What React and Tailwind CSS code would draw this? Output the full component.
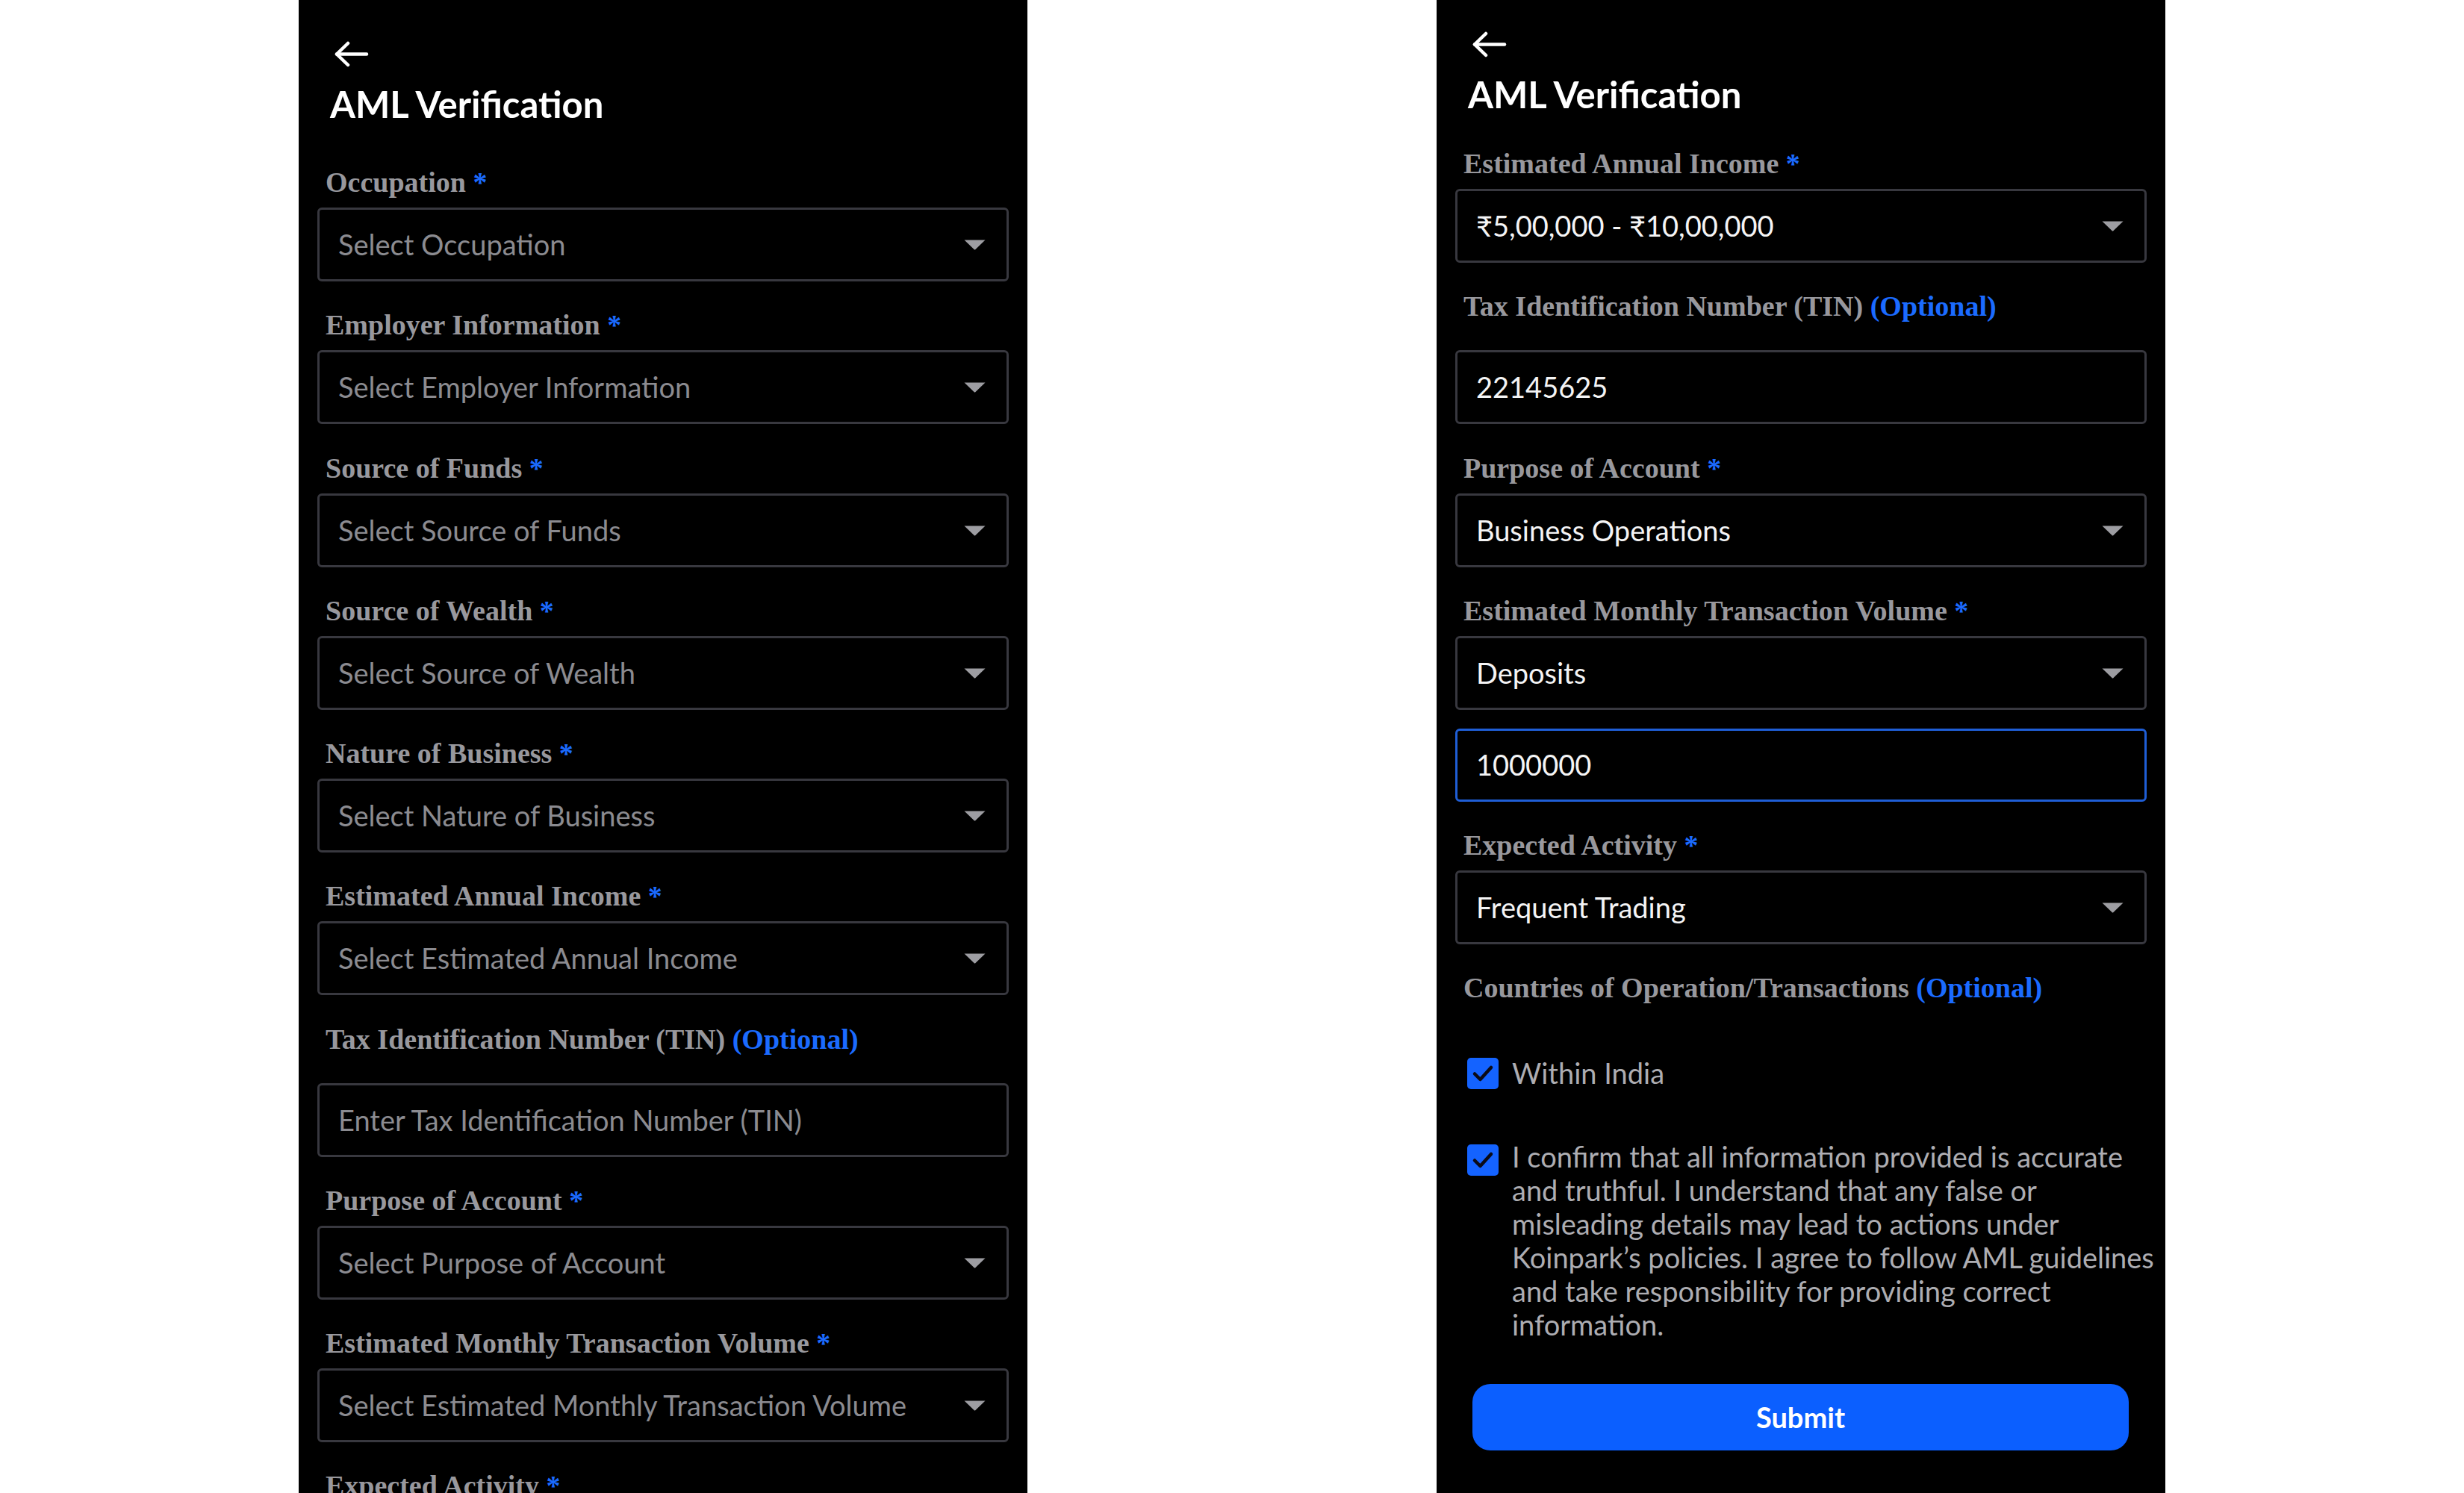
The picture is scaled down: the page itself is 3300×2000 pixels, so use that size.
import React from 'react'

/**
 * AML Verification – two phone screens side by side
 * left: empty form, right: filled + scrolled to the bottom
 */

function BackArrow() {
  return (
    <svg width="47" height="35" viewBox="0 0 47 35" fill="none" stroke="white" strokeWidth="4.5" strokeLinecap="round" strokeLinejoin="round">
      <path d="M44 17.5H4" />
      <path d="M19 3L4 17.5L19 32" />
    </svg>
  )
}

function Caret() {
  return (
    <svg width="31" height="15" viewBox="0 0 31 15">
      <path d="M1.5 1.5h28L16.5 14a1.4 1.4 0 0 1-2 0z" fill="#9d9da2" />
    </svg>
  )
}

function Label({ text, optional, required = true }) {
  return (
    <div className="h-[40px] pl-[11px] whitespace-nowrap font-['Liberation_Serif',serif] text-[38px] leading-[40px] font-bold text-[#98989d]">
      {text}
      {required && <span className="text-[#1b6bff]"> *</span>}
      {optional && <span className="text-[#1b6bff]"> (Optional)</span>}
    </div>
  )
}

function Select({ value, placeholder }) {
  return (
    <div className="flex h-[99px] items-center justify-between rounded-md border-[3px] border-[#38383f] pl-[25px] pr-[27px]">
      <span className={value ? 'text-[38px] text-[#f4f4f5]' : 'text-[38px] text-[#8b8b90]'}>{value || placeholder}</span>
      <Caret />
    </div>
  )
}

function TextBox({ value, placeholder, focused }) {
  return (
    <div
      className={
        focused
          ? 'flex h-[98px] items-center rounded-md border-[3px] border-[#1f5ed6] pl-[25px]'
          : 'flex h-[99px] items-center rounded-md border-[3px] border-[#38383f] pl-[25px]'
      }
    >
      <span className={value ? 'text-[38px] text-[#f4f4f5]' : 'text-[38px] text-[#8b8b90]'}>{value || placeholder}</span>
    </div>
  )
}

function SelectField({ label, value, placeholder }) {
  return (
    <div className="mb-[38.25px]">
      <Label text={label} />
      <div className="mt-[14px]">
        <Select value={value} placeholder={placeholder} />
      </div>
    </div>
  )
}

function TinField({ value }) {
  return (
    <div className="mb-[38.25px]">
      <Label text="Tax Identification Number (TIN)" required={false} optional />
      <div className="mt-[39px]">
        <TextBox value={value} placeholder="Enter Tax Identification Number (TIN)" />
      </div>
    </div>
  )
}

function CheckBox() {
  return (
    <div className="flex h-[42px] w-[42px] shrink-0 items-center justify-center rounded-[5px] bg-[#1463ff]">
      <svg width="30" height="24" viewBox="0 0 30 24" fill="none" stroke="#0b0b16" strokeWidth="4.5" strokeLinecap="round" strokeLinejoin="round">
        <path d="M4 12.5l7.5 7.5L26 4" />
      </svg>
    </div>
  )
}

function Panel({ top, formGap, children }) {
  return (
    <div className={`h-[2000px] w-[976px] shrink-0 overflow-hidden bg-black font-['Lato',sans-serif] ${top}`}>
      <div className="ml-[47px]">
        <BackArrow />
      </div>
      <h1 className="ml-[42px] mt-[25px] text-[49px] leading-[48px] font-bold text-white">AML Verification</h1>
      <div className={`px-[25px] ${formGap}`}>{children}</div>
    </div>
  )
}

export default function App() {
  return (
    <div className="flex h-[2000px] w-[3300px] justify-center gap-[548px] overflow-hidden bg-white">
      <Panel top="pt-[55px]" formGap="mt-[61px]">
        <SelectField label="Occupation" placeholder="Select Occupation" />
        <SelectField label="Employer Information" placeholder="Select Employer Information" />
        <SelectField label="Source of Funds" placeholder="Select Source of Funds" />
        <SelectField label="Source of Wealth" placeholder="Select Source of Wealth" />
        <SelectField label="Nature of Business" placeholder="Select Nature of Business" />
        <SelectField label="Estimated Annual Income" placeholder="Select Estimated Annual Income" />
        <TinField />
        <SelectField label="Purpose of Account" placeholder="Select Purpose of Account" />
        <SelectField label="Estimated Monthly Transaction Volume" placeholder="Select Estimated Monthly Transaction Volume" />
        <SelectField label="Expected Activity" placeholder="Select Expected Activity" />
      </Panel>

      <Panel top="pt-[42px]" formGap="mt-[49px]">
        <SelectField label="Estimated Annual Income" value="₹5,00,000 - ₹10,00,000" />
        <TinField value="22145625" />
        <SelectField label="Purpose of Account" value="Business Operations" />
        <div className="mb-[38.25px]">
          <Label text="Estimated Monthly Transaction Volume" />
          <div className="mt-[14px]">
            <Select value="Deposits" />
          </div>
          <div className="mt-[25px]">
            <TextBox value="1000000" focused />
          </div>
        </div>
        <SelectField label="Expected Activity" value="Frequent Trading" />

        <Label text="Countries of Operation/Transactions" required={false} optional />

        <div className="mt-[72px] flex h-[45px] items-center gap-[18px] pl-[16px]">
          <CheckBox />
          <span className="text-[38px] leading-[45px] text-[#adadb2]">Within India</span>
        </div>

        <div className="mr-[-22px] mt-[67px] flex items-start gap-[18px] pl-[16px]">
          <div className="mt-[6px]">
            <CheckBox />
          </div>
          <p className="flex-1 text-[38px] leading-[45px] text-[#adadb2]">
            I confirm that all information provided is accurate and truthful. I understand that any false or misleading details may lead to actions under Koinpark’s policies. I agree to follow AML guidelines and take responsibility for providing correct information.
          </p>
        </div>

        <button className="mx-[23px] mt-[57px] flex h-[89px] w-[879px] items-center justify-center rounded-[24px] bg-[#0b5fff] text-[38px] font-bold text-white">
          Submit
        </button>
      </Panel>
    </div>
  )
}
